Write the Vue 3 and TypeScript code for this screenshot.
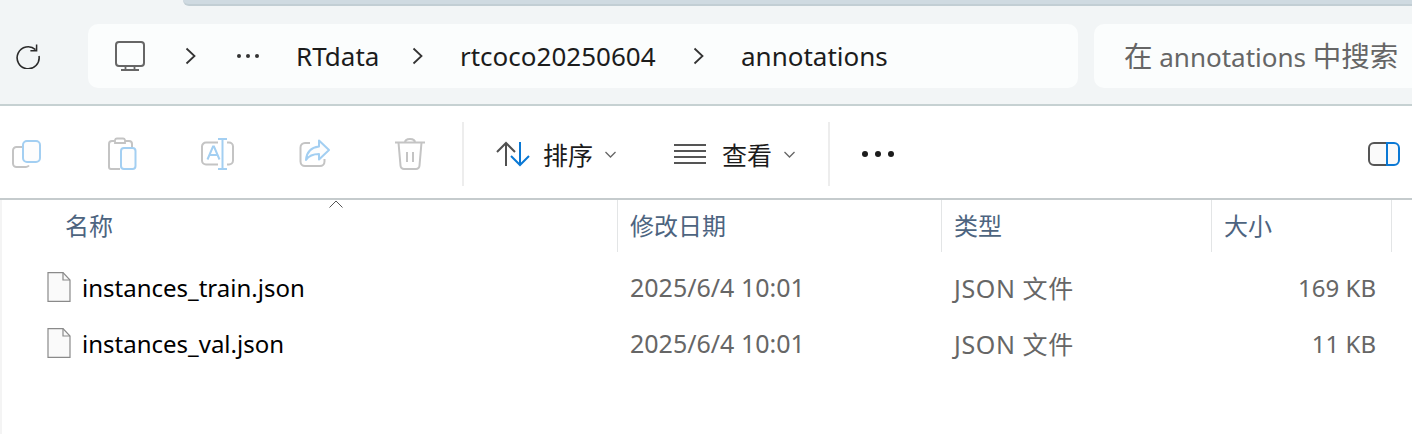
<script setup lang="ts">
interface Crumb {
  label: string
  width: number
}

interface FileRow {
  name: string
  date: string
  type: string
  size: string
}

const crumbs: Crumb[] = [
  { label: 'RTdata', width: 116 },
  { label: 'rtcoco20250604', width: 233 },
  { label: 'annotations', width: 160 },
]

const columns = ['名称', '修改日期', '类型', '大小']

const files: FileRow[] = [
  { name: 'instances_train.json', date: '2025/6/4 10:01', type: 'JSON 文件', size: '169 KB' },
  { name: 'instances_val.json', date: '2025/6/4 10:01', type: 'JSON 文件', size: '11 KB' },
]
</script>

<template>
  <div class="explorer">
    <header class="nav">
      <div class="nav__strip"></div>
      <div class="nav__row">
        <svg class="refresh" width="26" height="26" viewBox="0 0 26 26" fill="none" stroke="#2b2b2b" stroke-width="1.6">
          <path d="M20.5 6.6A11 11 0 1 0 24 13" />
          <path d="M21.6 1.5v6.2h-6.2" stroke-width="1.5" />
        </svg>
        <div class="crumbs">
          <svg class="monitor" width="32" height="32" viewBox="0 0 32 32" fill="none" stroke="#666" stroke-width="2">
            <rect x="2" y="2" width="28" height="24" rx="3" fill="#fbfdfd" />
            <path d="M11.5 26v3.5M20.5 26v3.5M7 30h18" stroke-width="1.8" />
          </svg>
          <svg class="chev chev--first" width="12" height="18" viewBox="0 0 12 18" fill="none" stroke="#333" stroke-width="1.8">
            <path d="M1.500 1.500 9.500 9l-8 7.500" />
          </svg>
          <span class="crumbs__more">
            <i></i><i></i><i></i>
          </span>
          <template v-for="(c, i) in crumbs" :key="c.label">
            <span class="crumbs__label" :style="{ width: c.width + 'px' }">{{ c.label }}</span>
            <svg v-if="i < crumbs.length - 1" class="chev" width="12" height="18" viewBox="0 0 12 18" fill="none" stroke="#333" stroke-width="1.8">
              <path d="M1.500 1.500 9.500 9l-8 7.500" />
            </svg>
          </template>
        </div>
        <div class="search"><span class="search__cjk">在</span> annotations <span class="search__cjk">中搜索</span></div>
      </div>
    </header>

    <section class="toolbar">
      <div class="toolbar__group">
        <svg class="tool tool--first" width="30" height="30" viewBox="0 0 30 30" fill="none" stroke-width="2">
          <path d="M11 8H5.500A3.500 3.500 0 0 0 2 11.500v13A3.500 3.500 0 0 0 5.500 28H15a4 4 0 0 0 3-1.500" stroke="#c4c4c4" />
          <rect x="12" y="2" width="17" height="21" rx="4" stroke="#a3cff2" fill="#fdfdfd" />
        </svg>
        <svg class="tool" width="30" height="34" viewBox="0 0 30 34" fill="none" stroke-width="2">
          <path d="M8 4H5a3 3 0 0 0-3 3v23a2 2 0 0 0 2 2h9M18 4h4a3 3 0 0 1 3 3v3" stroke="#c4c4c4" />
          <path d="M8 3a2 2 0 0 1 2-1.500h6A2 2 0 0 1 18 3v3H8Z" stroke="#c4c4c4" stroke-width="1.800" />
          <rect x="14" y="11" width="14.500" height="21" rx="3" stroke="#a3cff2" fill="#fdfdfd" />
        </svg>
        <svg class="tool" width="34" height="34" viewBox="0 0 34 34" fill="none" stroke-width="2">
          <path d="M17 5.500H5a4 4 0 0 0-4 4v14a4 4 0 0 0 4 4h12M26 5.500h2a4 4 0 0 1 4 4v14a4 4 0 0 1-4 4h-2" stroke="#c4c4c4" />
          <path d="M17 2h9M17 32h9M21.500 2v30" stroke="#a3cff2" />
          <path d="M6.500 22.500 12 9.500h1l5.500 13M8.500 18h8" stroke="#a3cff2" />
        </svg>
        <svg class="tool" width="32" height="30" viewBox="0 0 32 30" fill="none" stroke-width="2">
          <path d="M11 4H6A4.500 4.500 0 0 0 1.500 8.500v14A4.500 4.500 0 0 0 6 27h15a4.500 4.500 0 0 0 4.500-4.500V20" stroke="#c4c4c4" />
          <path d="M20 1.500 30 11 20 20.500V15c-6 0-10 1.500-13 6 .5-8 5-12.500 13-13.500Z" stroke="#a3cff2" fill="#fdfdfd" stroke-linejoin="round" />
        </svg>
        <svg class="tool tool--last" width="30" height="32" viewBox="0 0 30 32" fill="none" stroke="#c4c4c4" stroke-width="2">
          <path d="M0 4.500h30M10 4.500C10 2.500 12 1 15 1s5 1.500 5 3.500" />
          <path d="M3.500 4.500 5.500 27.500A3.500 3.500 0 0 0 9 31h12a3.500 3.500 0 0 0 3.500-3.500l2-23" />
          <path d="M12 14v10M18 14v10" />
        </svg>
      </div>
      <div class="toolbar__sep"></div>
      <div class="toolbar__action toolbar__action--sort">
        <svg width="34" height="26" viewBox="0 0 34 26" fill="none" stroke-width="2">
          <path d="M10 25V2M1 11l9-9 9 9" stroke="#505050" />
          <path d="M24 1v23M15 15l9 9 9-9" stroke="#0a78d4" />
        </svg>
        <span class="toolbar__text">排序</span>
        <svg class="caret" width="11" height="7" viewBox="0 0 11 7" fill="none" stroke="#666" stroke-width="1.300">
          <path d="M.5 1 5.500 6l5-5" />
        </svg>
      </div>
      <div class="toolbar__action toolbar__action--view">
        <svg width="32" height="22" viewBox="0 0 32 22" fill="none" stroke="#555" stroke-width="2">
          <path d="M0 2h32M0 8h32M0 14h32M0 20h32" />
        </svg>
        <span class="toolbar__text">查看</span>
        <svg class="caret" width="11" height="7" viewBox="0 0 11 7" fill="none" stroke="#666" stroke-width="1.300">
          <path d="M.5 1 5.500 6l5-5" />
        </svg>
      </div>
      <div class="toolbar__sep"></div>
      <div class="toolbar__dots"><i></i><i></i><i></i></div>
      <svg class="pane" width="32" height="24" viewBox="0 0 32 24" fill="none" stroke-width="2">
        <path d="M19 1H6a5 5 0 0 0-5 5v12a5 5 0 0 0 5 5h13" stroke="#555" fill="#fafafa" />
        <path d="M19 1h7a5 5 0 0 1 5 5v12a5 5 0 0 1-5 5h-7Z" stroke="#0a78d4" fill="#fafafa" />
      </svg>
    </section>

    <main class="list">
      <svg class="sort-mark" width="14" height="8" viewBox="0 0 14 8" fill="none" stroke="#555" stroke-width="1">
        <path d="M.5 7.500 7 1l6.500 6.500" />
      </svg>
      <div class="list__head">
        <div v-for="col in columns" :key="col" class="list__col">{{ col }}</div>
        <div class="list__col"></div>
      </div>
      <div v-for="f in files" :key="f.name" class="list__row">
        <div class="list__name">
          <svg width="24" height="30" viewBox="0 0 24 30" fill="#fafafa" stroke="#8a8a8a" stroke-width="1.200">
            <path d="M1 .6h15L23 8v21.400H1Z" />
            <path d="M16 .6V8h7" fill="none" />
          </svg>
          <span>{{ f.name }}</span>
        </div>
        <div class="list__cell list__cell--date">{{ f.date }}</div>
        <div class="list__cell list__cell--type">{{ f.type }}</div>
        <div class="list__cell list__cell--size">{{ f.size }}</div>
      </div>
    </main>
  </div>
</template>

<style>
html,
body {
  margin: 0;
  background: #ffffff;
  overflow: hidden;
}
</style>

<style scoped>
.explorer {
  width: 1412px;
  height: 434px;
  overflow: hidden;
  font-family: "Noto Sans", "Noto Sans CJK SC", sans-serif;
  background: #ffffff;
}

.nav {
  height: 106px;
  box-sizing: border-box;
  background: #f2f5f6;
  border-bottom: 2px solid #c6d1d2;
}

.nav__strip {
  height: 6px;
  margin-left: 183px;
  box-sizing: border-box;
  background: #cfdae1;
  border-bottom: 2px solid #c2ced4;
  border-bottom-left-radius: 8px;
}

.nav__row {
  display: flex;
  align-items: center;
  height: 64px;
  margin-top: 18px;
}

.refresh {
  margin-left: 15px;
  flex: none;
}

.crumbs {
  display: flex;
  align-items: center;
  width: 990px;
  height: 64px;
  margin-left: 47px;
  flex: none;
  background: #fbfdfd;
  border-radius: 10px;
  font-size: 26px;
  color: #1c1c1c;
}

.monitor {
  margin-left: 26px;
  flex: none;
}

.chev {
  flex: none;
  margin-right: 36px;
}

.chev--first {
  margin-left: 39px;
  margin-right: 40px;
}

.crumbs__more {
  display: flex;
  gap: 5px;
  width: 59px;
  flex: none;
}

.crumbs__more i {
  width: 4px;
  height: 4px;
  border-radius: 50%;
  background: #333;
}

.crumbs__label {
  flex: none;
  white-space: nowrap;
}

.search {
  flex: 1;
  height: 64px;
  margin-left: 16px;
  padding-left: 30px;
  background: #fbfdfd;
  border-radius: 10px 0 0 10px;
  font-size: 26px;
  line-height: 64px;
  color: #666;
  white-space: nowrap;
}

.search__cjk {
  font-size: 28.5px;
}

.toolbar {
  display: flex;
  align-items: center;
  height: 94px;
  padding-top: 4px;
  box-sizing: border-box;
  border-bottom: 2px solid #c5cbcd;
}

.toolbar__group {
  display: flex;
  align-items: center;
  width: 462px;
  flex: none;
  padding-left: 11px;
  box-sizing: border-box;
}

.tool {
  flex: none;
  margin-right: 64px;
}

.tool--first {
  margin-right: 66px;
}

.tool--last {
  margin-right: 0;
}

.toolbar__sep {
  width: 2px;
  height: 64px;
  flex: none;
  background: #ededed;
}

.toolbar__action {
  display: flex;
  align-items: center;
  flex: none;
}

.toolbar__action--sort {
  margin-left: 32px;
  width: 178px;
}

.toolbar__action--view {
  width: 154px;
}

.toolbar__text {
  margin-left: 13px;
  font-size: 25px;
  color: #1c1c1c;
  white-space: nowrap;
}

.toolbar__action--view .toolbar__text {
  margin-left: 16px;
}

.caret {
  margin-left: 12px;
}

.toolbar__dots {
  display: flex;
  gap: 7px;
  margin-left: 32px;
  flex: none;
}

.toolbar__dots i {
  width: 6px;
  height: 6px;
  border-radius: 50%;
  background: #1c1c1c;
}

.pane {
  margin-left: 474px;
  flex: none;
}

.list {
  position: relative;
  height: 235px;
  border-left: 2px solid #f4f4f4;
}

.sort-mark {
  position: absolute;
  left: 327px;
  top: 0;
}

.list__head {
  display: grid;
  grid-template-columns: 615px 324px 270px 180px 1fr;
  height: 50px;
}

.list__col {
  box-sizing: border-box;
  padding-left: 12px;
  border-left: 1px solid #e3e5e6;
  font-size: 24px;
  line-height: 52px;
  color: #4d6480;
}

.list__col:first-child {
  padding-left: 63px;
  border-left: none;
}

.list__row {
  display: grid;
  grid-template-columns: 616px 324px 270px 164px;
  align-items: center;
  height: 56px;
}

.list__head + .list__row {
  margin-top: 9px;
}

.list__name {
  display: flex;
  align-items: center;
  gap: 11px;
  padding-left: 45px;
  font-size: 24px;
  color: #000000;
  white-space: nowrap;
}

.list__cell {
  padding-left: 12px;
  color: #666666;
  white-space: nowrap;
}

.list__cell--date {
  font-size: 25px;
}

.list__cell--type {
  font-size: 25px;
  letter-spacing: 0.6px;
}

.list__cell--size {
  padding-left: 0;
  font-size: 24px;
  text-align: right;
}
</style>
